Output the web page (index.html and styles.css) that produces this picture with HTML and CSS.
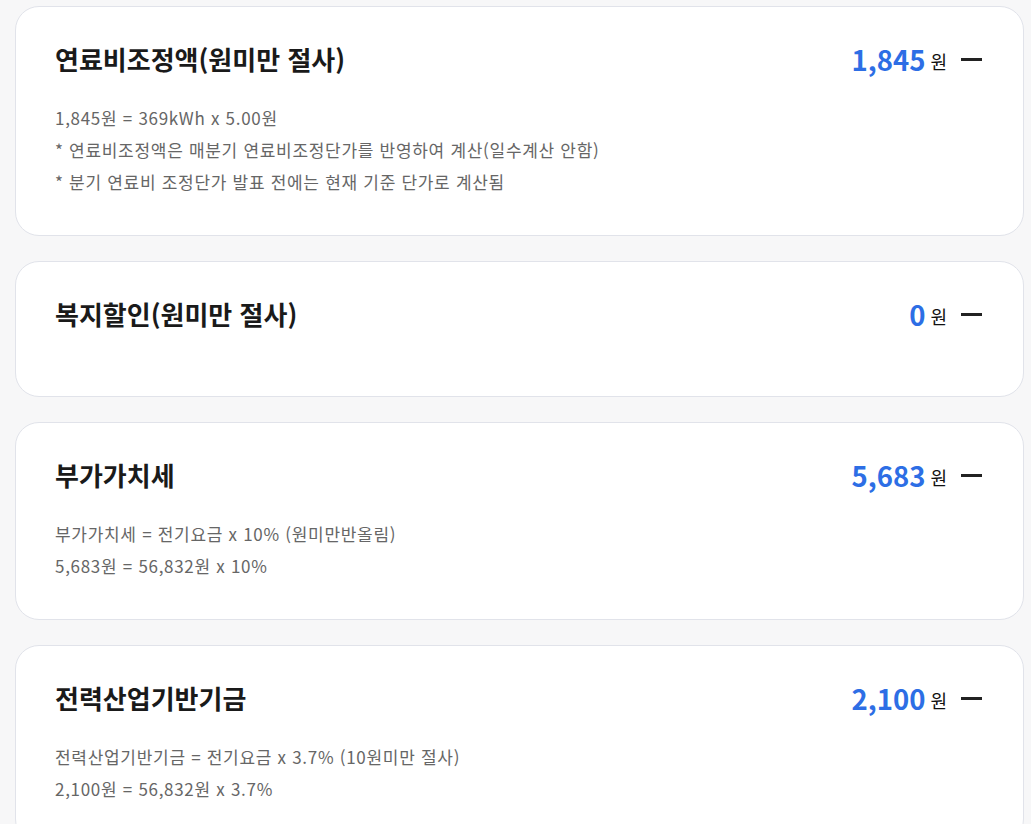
FILE: index.html
```html
<!DOCTYPE html>
<html lang="ko">
<head>
<meta charset="utf-8">
<link rel="stylesheet" href="styles.css">
</head>
<body>
<div class="list">
  <section class="card">
    <div class="head">
      <h2 class="title">연료비조정액(원미만 절사)</h2>
      <div class="amount"><span class="num">1,845</span><span class="unit">원</span><span class="minus"></span></div>
    </div>
    <div class="details">
      <p>1,845원 = 369kWh x 5.00원</p>
      <p>* 연료비조정액은 매분기 연료비조정단가를 반영하여 계산(일수계산 안함)</p>
      <p>* 분기 연료비 조정단가 발표 전에는 현재 기준 단가로 계산됨</p>
    </div>
  </section>
  <section class="card">
    <div class="head">
      <h2 class="title">복지할인(원미만 절사)</h2>
      <div class="amount"><span class="num">0</span><span class="unit">원</span><span class="minus"></span></div>
    </div>
    <div class="details empty"></div>
  </section>
  <section class="card">
    <div class="head">
      <h2 class="title">부가가치세</h2>
      <div class="amount"><span class="num">5,683</span><span class="unit">원</span><span class="minus"></span></div>
    </div>
    <div class="details">
      <p>부가가치세 = 전기요금 x 10% (원미만반올림)</p>
      <p>5,683원 = 56,832원 x 10%</p>
    </div>
  </section>
  <section class="card">
    <div class="head">
      <h2 class="title">전력산업기반기금</h2>
      <div class="amount"><span class="num">2,100</span><span class="unit">원</span><span class="minus"></span></div>
    </div>
    <div class="details">
      <p>전력산업기반기금 = 전기요금 x 3.7% (10원미만 절사)</p>
      <p>2,100원 = 56,832원 x 3.7%</p>
    </div>
  </section>
</div>
</body>
</html>
```
FILE: styles.css
```css
html, body {
  margin: 0;
  padding: 0;
  background: #f7f7f8;
  font-family: "Noto Sans CJK KR", "Noto Sans", sans-serif;
}
.list {
  display: flex;
  flex-direction: column;
  gap: 25px;
  padding: 6px 7px 20px 15px;
}
.card {
  background: #fff;
  border: 1px solid #e1e3ea;
  border-radius: 24px;
  padding: 34px 38px 37px 39px;
}
.head {
  display: flex;
  align-items: center;
  justify-content: space-between;
  height: 36px;
}
.title {
  margin: 0;
  font-size: 26px;
  font-weight: 700;
  color: #1a1a1a;
  line-height: 36px;
}
.amount {
  display: flex;
  align-items: center;
}
.num {
  font-size: 27.5px;
  font-weight: 700;
  color: #2d6ee5;
  line-height: 36px;
}
.unit {
  font-size: 18px;
  color: #111;
  margin-left: 5px;
  margin-top: 4px;
}
.minus {
  display: block;
  width: 21px;
  height: 3px;
  background: #222;
  margin-left: 14px;
  margin-right: 3px;
}
.details {
  margin-top: 25px;
}
.details.empty {
  height: 2px;
}
.details p {
  margin: 0;
  font-size: 17px;
  letter-spacing: 0.7px;
  line-height: 32px;
  color: #666;
}
```
